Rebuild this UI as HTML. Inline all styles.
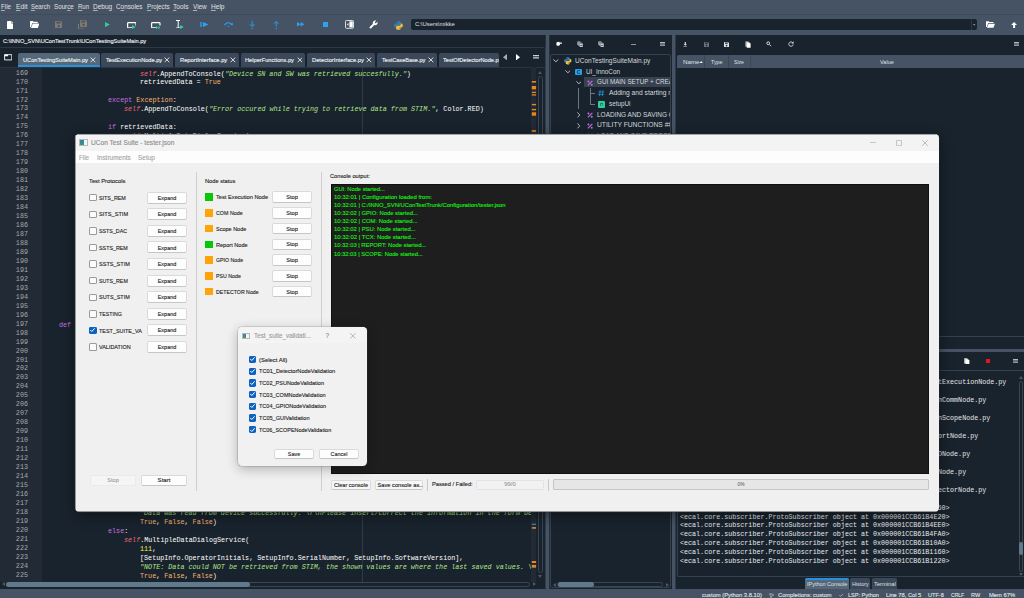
<!DOCTYPE html>
<html><head><meta charset="utf-8"><title>UCon Test Suite</title>
<style>
html,body{margin:0;padding:0;}
body{width:1024px;height:598px;overflow:hidden;background:#19232d;position:relative;font-family:"Liberation Sans",sans-serif;}
#root{position:absolute;left:0;top:0;width:1024px;height:598px;overflow:hidden;}
#root div,#root svg{position:absolute;box-sizing:border-box;}
.t{white-space:pre;}
#win .t{-webkit-text-stroke:0.12px currentColor;}
.clip{overflow:hidden;}
u{text-decoration:underline;text-underline-offset:0.6px;text-decoration-thickness:0.6px;text-decoration-color:rgba(224,225,227,.65)}
</style></head><body><div id="root">
<div style="left:0.00px;top:0.00px;width:1024.00px;height:35.00px;background:#455364;"></div>
<div style="left:0.00px;top:14.00px;width:1024.00px;height:1.00px;background:#3e4b5b;"></div>
<div class="t" style="top:2.50px;font-size:6.300px;line-height:8.19px;color:#e0e1e3;font-family:'Liberation Sans',sans-serif;left:1.30px;transform:scaleX(0.9850);transform-origin:0 50%;"><u>F</u>ile</div>
<div class="t" style="top:2.50px;font-size:6.300px;line-height:8.19px;color:#e0e1e3;font-family:'Liberation Sans',sans-serif;left:15.50px;transform:scaleX(1.0593);transform-origin:0 50%;"><u>E</u>dit</div>
<div class="t" style="top:2.50px;font-size:6.300px;line-height:8.19px;color:#e0e1e3;font-family:'Liberation Sans',sans-serif;left:30.80px;transform:scaleX(0.9518);transform-origin:0 50%;"><u>S</u>earch</div>
<div class="t" style="top:2.50px;font-size:6.300px;line-height:8.19px;color:#e0e1e3;font-family:'Liberation Sans',sans-serif;left:54.00px;transform:scaleX(0.9919);transform-origin:0 50%;">Sour<u>c</u>e</div>
<div class="t" style="top:2.50px;font-size:6.300px;line-height:8.19px;color:#e0e1e3;font-family:'Liberation Sans',sans-serif;left:77.80px;transform:scaleX(0.9518);transform-origin:0 50%;"><u>R</u>un</div>
<div class="t" style="top:2.50px;font-size:6.300px;line-height:8.19px;color:#e0e1e3;font-family:'Liberation Sans',sans-serif;left:92.80px;transform:scaleX(1.0342);transform-origin:0 50%;"><u>D</u>ebug</div>
<div class="t" style="top:2.50px;font-size:6.300px;line-height:8.19px;color:#e0e1e3;font-family:'Liberation Sans',sans-serif;left:116.30px;transform:scaleX(1.0089);transform-origin:0 50%;">C<u>o</u>nsoles</div>
<div class="t" style="top:2.50px;font-size:6.300px;line-height:8.19px;color:#e0e1e3;font-family:'Liberation Sans',sans-serif;left:146.80px;transform:scaleX(0.9887);transform-origin:0 50%;"><u>P</u>rojects</div>
<div class="t" style="top:2.50px;font-size:6.300px;line-height:8.19px;color:#e0e1e3;font-family:'Liberation Sans',sans-serif;left:173.30px;transform:scaleX(1.0539);transform-origin:0 50%;"><u>T</u>ools</div>
<div class="t" style="top:2.50px;font-size:6.300px;line-height:8.19px;color:#e0e1e3;font-family:'Liberation Sans',sans-serif;left:192.80px;transform:scaleX(1.0117);transform-origin:0 50%;"><u>V</u>iew</div>
<div class="t" style="top:2.50px;font-size:6.300px;line-height:8.19px;color:#e0e1e3;font-family:'Liberation Sans',sans-serif;left:210.80px;transform:scaleX(1.0419);transform-origin:0 50%;"><u>H</u>elp</div>
<div style="left:410.50px;top:19.00px;width:566.50px;height:10.80px;background:#19232d;border-radius:2px;"></div>
<div style="left:971.00px;top:19.00px;width:1.00px;height:10.80px;background:#2c3845;"></div>
<div class="t" style="top:21.23px;font-size:5.800px;line-height:7.54px;color:#e0e1e3;font-family:'Liberation Sans',sans-serif;left:415.00px;transform:scaleX(1.0123);transform-origin:0 50%;">C:\Users\mikke</div>
<div class="t" style="top:38.00px;font-size:5.700px;line-height:7.41px;color:#eceef0;font-family:'Liberation Sans',sans-serif;left:2.50px;transform:scaleX(0.9926);transform-origin:0 50%;-webkit-text-stroke:0.14px currentColor;">C:\INNO_SVN\UConTestTrunk\UConTestingSuiteMain.py</div>
<div style="left:0.00px;top:47.40px;width:544.40px;height:0.80px;background:#2c3846;"></div>
<div style="left:544.60px;top:47.00px;width:1.20px;height:541.00px;background:#2b3643;"></div>
<svg style="left:545px;top:35px" width="5" height="554"><rect x="0.7" y="0" width="3.6" height="554" fill="#455364"/></svg>
<svg style="left:671px;top:35px" width="5" height="554"><rect x="1" y="0" width="3.5" height="554" fill="#455364"/></svg>
<div style="left:0.00px;top:589.00px;width:1024.00px;height:9.00px;background:#455364;"></div>
<div style="left:18.00px;top:53.40px;width:82.00px;height:13.60px;background:#54687a;border-radius:2px 2px 0 0;border-bottom:2px solid #2a8fdc;"></div>
<div class="t" style="top:56.59px;font-size:5.700px;line-height:7.41px;color:#eceef0;font-family:'Liberation Sans',sans-serif;left:22.60px;transform:scaleX(0.9911);transform-origin:0 50%;-webkit-text-stroke:0.14px currentColor;">UConTestingSuiteMain.py</div>
<svg style="left:90.40px;top:57.3px" width="5.8" height="5.8" viewBox="0 0 10 10"><path d="M1 1L9 9M9 1L1 9" stroke="#f2f3f4" stroke-width="1.5" fill="none"/></svg>
<div style="left:101.00px;top:53.40px;width:71.80px;height:13.60px;background:#3b4859;border-radius:2px 2px 0 0;"></div>
<div class="t" style="top:56.59px;font-size:5.700px;line-height:7.41px;color:#eceef0;font-family:'Liberation Sans',sans-serif;left:105.50px;transform:scaleX(0.9926);transform-origin:0 50%;-webkit-text-stroke:0.14px currentColor;">TestExecutionNode.py</div>
<svg style="left:164.40px;top:57.3px" width="5.8" height="5.8" viewBox="0 0 10 10"><path d="M1 1L9 9M9 1L1 9" stroke="#f2f3f4" stroke-width="1.5" fill="none"/></svg>
<div style="left:174.50px;top:53.40px;width:64.80px;height:13.60px;background:#3b4859;border-radius:2px 2px 0 0;"></div>
<div class="t" style="top:56.59px;font-size:5.700px;line-height:7.41px;color:#eceef0;font-family:'Liberation Sans',sans-serif;left:179.50px;transform:scaleX(1.0087);transform-origin:0 50%;-webkit-text-stroke:0.14px currentColor;">ReportInterface.py</div>
<svg style="left:229.90px;top:57.3px" width="5.8" height="5.8" viewBox="0 0 10 10"><path d="M1 1L9 9M9 1L1 9" stroke="#f2f3f4" stroke-width="1.5" fill="none"/></svg>
<div style="left:241.00px;top:53.40px;width:64.00px;height:13.60px;background:#3b4859;border-radius:2px 2px 0 0;"></div>
<div class="t" style="top:56.59px;font-size:5.700px;line-height:7.41px;color:#eceef0;font-family:'Liberation Sans',sans-serif;left:244.50px;transform:scaleX(0.9978);transform-origin:0 50%;-webkit-text-stroke:0.14px currentColor;">HelperFunctions.py</div>
<svg style="left:296.60px;top:57.3px" width="5.8" height="5.8" viewBox="0 0 10 10"><path d="M1 1L9 9M9 1L1 9" stroke="#f2f3f4" stroke-width="1.5" fill="none"/></svg>
<div style="left:307.00px;top:53.40px;width:68.30px;height:13.60px;background:#3b4859;border-radius:2px 2px 0 0;"></div>
<div class="t" style="top:56.59px;font-size:5.700px;line-height:7.41px;color:#eceef0;font-family:'Liberation Sans',sans-serif;left:311.50px;transform:scaleX(1.0131);transform-origin:0 50%;-webkit-text-stroke:0.14px currentColor;">DetectorInterface.py</div>
<svg style="left:366.40px;top:57.3px" width="5.8" height="5.8" viewBox="0 0 10 10"><path d="M1 1L9 9M9 1L1 9" stroke="#f2f3f4" stroke-width="1.5" fill="none"/></svg>
<div style="left:377.00px;top:53.40px;width:59.50px;height:13.60px;background:#3b4859;border-radius:2px 2px 0 0;"></div>
<div class="t" style="top:56.59px;font-size:5.700px;line-height:7.41px;color:#eceef0;font-family:'Liberation Sans',sans-serif;left:381.50px;transform:scaleX(0.9807);transform-origin:0 50%;-webkit-text-stroke:0.14px currentColor;">TestCaseBase.py</div>
<svg style="left:427.90px;top:57.3px" width="5.8" height="5.8" viewBox="0 0 10 10"><path d="M1 1L9 9M9 1L1 9" stroke="#f2f3f4" stroke-width="1.5" fill="none"/></svg>
<div style="left:438.50px;top:53.40px;width:60.00px;height:13.60px;background:#3b4859;border-radius:2px 2px 0 0;"></div>
<div class="clip" style="left:443px;top:54px;width:55.5px;height:13px">
<div class="t" style="top:2.59px;font-size:5.700px;line-height:7.41px;color:#eceef0;font-family:'Liberation Sans',sans-serif;left:0.00px;transform:scaleX(0.9891);transform-origin:0 50%;-webkit-text-stroke:0.14px currentColor;">TestOfDetectorNode.py</div>
</div>
<svg style="left:4px;top:54px" width="8.4" height="6.6" viewBox="0 0 17 13"><path d="M1.2 1.2H15.8V11.8H1.2Z" fill="none" stroke="#fff" stroke-width="1.8"/><path d="M1 1H8V4.4H1Z" fill="#fff"/></svg>
<svg style="left:502.5px;top:53.6px" width="4" height="6.4" viewBox="0 0 4 6.4"><path d="M4 0V6.4L0 3.2Z" fill="#a4acb4"/></svg>
<svg style="left:516.3px;top:53.6px" width="4" height="6.4" viewBox="0 0 4 6.4"><path d="M0 0V6.4L4 3.2Z" fill="#fff"/></svg>
<svg style="left:532.60px;top:55.00px" width="6.4" height="4.4" viewBox="0 0 6.4 4.4" preserveAspectRatio="none"><path d="M0 0H6.4V1H0ZM0 1.7H6.4V2.7H0ZM0 3.4H6.4V4.4H0Z" fill="#c9cdd1"/></svg>
<div style="left:0.00px;top:67.00px;width:42.00px;height:514.50px;background:#222b35;"></div>
<div style="left:0.00px;top:66.60px;width:545.00px;height:1.00px;background:#2a3541;"></div>
<div style="left:530.90px;top:67.00px;width:5.60px;height:514.50px;background:#222b35;"></div>
<div style="left:361.60px;top:67.00px;width:0.70px;height:514.50px;background:#2f3b48;"></div>
<div class="t" style="top:68.62px;font-size:7.500px;line-height:9.75px;color:#a4a8ac;font-family:'Liberation Mono',monospace;left:-372.40px;width:400px;text-align:right;transform:scaleX(0.8981);transform-origin:100% 50%;">169</div>
<div class="t" style="top:77.59px;font-size:7.500px;line-height:9.75px;color:#a4a8ac;font-family:'Liberation Mono',monospace;left:-372.40px;width:400px;text-align:right;transform:scaleX(0.8981);transform-origin:100% 50%;">170</div>
<div class="t" style="top:86.56px;font-size:7.500px;line-height:9.75px;color:#a4a8ac;font-family:'Liberation Mono',monospace;left:-372.40px;width:400px;text-align:right;transform:scaleX(0.8981);transform-origin:100% 50%;">171</div>
<div class="t" style="top:95.52px;font-size:7.500px;line-height:9.75px;color:#a4a8ac;font-family:'Liberation Mono',monospace;left:-372.40px;width:400px;text-align:right;transform:scaleX(0.8981);transform-origin:100% 50%;">172</div>
<div class="t" style="top:104.48px;font-size:7.500px;line-height:9.75px;color:#a4a8ac;font-family:'Liberation Mono',monospace;left:-372.40px;width:400px;text-align:right;transform:scaleX(0.8981);transform-origin:100% 50%;">173</div>
<div class="t" style="top:113.45px;font-size:7.500px;line-height:9.75px;color:#a4a8ac;font-family:'Liberation Mono',monospace;left:-372.40px;width:400px;text-align:right;transform:scaleX(0.8981);transform-origin:100% 50%;">174</div>
<div class="t" style="top:122.41px;font-size:7.500px;line-height:9.75px;color:#a4a8ac;font-family:'Liberation Mono',monospace;left:-372.40px;width:400px;text-align:right;transform:scaleX(0.8981);transform-origin:100% 50%;">175</div>
<div class="t" style="top:131.38px;font-size:7.500px;line-height:9.75px;color:#a4a8ac;font-family:'Liberation Mono',monospace;left:-372.40px;width:400px;text-align:right;transform:scaleX(0.8981);transform-origin:100% 50%;">176</div>
<div class="t" style="top:140.34px;font-size:7.500px;line-height:9.75px;color:#a4a8ac;font-family:'Liberation Mono',monospace;left:-372.40px;width:400px;text-align:right;transform:scaleX(0.8981);transform-origin:100% 50%;">177</div>
<div class="t" style="top:149.31px;font-size:7.500px;line-height:9.75px;color:#a4a8ac;font-family:'Liberation Mono',monospace;left:-372.40px;width:400px;text-align:right;transform:scaleX(0.8981);transform-origin:100% 50%;">178</div>
<div class="t" style="top:158.28px;font-size:7.500px;line-height:9.75px;color:#a4a8ac;font-family:'Liberation Mono',monospace;left:-372.40px;width:400px;text-align:right;transform:scaleX(0.8981);transform-origin:100% 50%;">179</div>
<div class="t" style="top:167.24px;font-size:7.500px;line-height:9.75px;color:#a4a8ac;font-family:'Liberation Mono',monospace;left:-372.40px;width:400px;text-align:right;transform:scaleX(0.8981);transform-origin:100% 50%;">180</div>
<div class="t" style="top:176.20px;font-size:7.500px;line-height:9.75px;color:#a4a8ac;font-family:'Liberation Mono',monospace;left:-372.40px;width:400px;text-align:right;transform:scaleX(0.8981);transform-origin:100% 50%;">181</div>
<div class="t" style="top:185.17px;font-size:7.500px;line-height:9.75px;color:#a4a8ac;font-family:'Liberation Mono',monospace;left:-372.40px;width:400px;text-align:right;transform:scaleX(0.8981);transform-origin:100% 50%;">182</div>
<div class="t" style="top:194.13px;font-size:7.500px;line-height:9.75px;color:#a4a8ac;font-family:'Liberation Mono',monospace;left:-372.40px;width:400px;text-align:right;transform:scaleX(0.8981);transform-origin:100% 50%;">183</div>
<div class="t" style="top:203.10px;font-size:7.500px;line-height:9.75px;color:#a4a8ac;font-family:'Liberation Mono',monospace;left:-372.40px;width:400px;text-align:right;transform:scaleX(0.8981);transform-origin:100% 50%;">184</div>
<div class="t" style="top:212.06px;font-size:7.500px;line-height:9.75px;color:#a4a8ac;font-family:'Liberation Mono',monospace;left:-372.40px;width:400px;text-align:right;transform:scaleX(0.8981);transform-origin:100% 50%;">185</div>
<div class="t" style="top:221.03px;font-size:7.500px;line-height:9.75px;color:#a4a8ac;font-family:'Liberation Mono',monospace;left:-372.40px;width:400px;text-align:right;transform:scaleX(0.8981);transform-origin:100% 50%;">186</div>
<div class="t" style="top:230.00px;font-size:7.500px;line-height:9.75px;color:#a4a8ac;font-family:'Liberation Mono',monospace;left:-372.40px;width:400px;text-align:right;transform:scaleX(0.8981);transform-origin:100% 50%;">187</div>
<div class="t" style="top:238.96px;font-size:7.500px;line-height:9.75px;color:#a4a8ac;font-family:'Liberation Mono',monospace;left:-372.40px;width:400px;text-align:right;transform:scaleX(0.8981);transform-origin:100% 50%;">188</div>
<div class="t" style="top:247.93px;font-size:7.500px;line-height:9.75px;color:#a4a8ac;font-family:'Liberation Mono',monospace;left:-372.40px;width:400px;text-align:right;transform:scaleX(0.8981);transform-origin:100% 50%;">189</div>
<div class="t" style="top:256.89px;font-size:7.500px;line-height:9.75px;color:#a4a8ac;font-family:'Liberation Mono',monospace;left:-372.40px;width:400px;text-align:right;transform:scaleX(0.8981);transform-origin:100% 50%;">190</div>
<div class="t" style="top:265.86px;font-size:7.500px;line-height:9.75px;color:#a4a8ac;font-family:'Liberation Mono',monospace;left:-372.40px;width:400px;text-align:right;transform:scaleX(0.8981);transform-origin:100% 50%;">191</div>
<div class="t" style="top:274.82px;font-size:7.500px;line-height:9.75px;color:#a4a8ac;font-family:'Liberation Mono',monospace;left:-372.40px;width:400px;text-align:right;transform:scaleX(0.8981);transform-origin:100% 50%;">192</div>
<div class="t" style="top:283.78px;font-size:7.500px;line-height:9.75px;color:#a4a8ac;font-family:'Liberation Mono',monospace;left:-372.40px;width:400px;text-align:right;transform:scaleX(0.8981);transform-origin:100% 50%;">193</div>
<div class="t" style="top:292.75px;font-size:7.500px;line-height:9.75px;color:#a4a8ac;font-family:'Liberation Mono',monospace;left:-372.40px;width:400px;text-align:right;transform:scaleX(0.8981);transform-origin:100% 50%;">194</div>
<div class="t" style="top:301.72px;font-size:7.500px;line-height:9.75px;color:#a4a8ac;font-family:'Liberation Mono',monospace;left:-372.40px;width:400px;text-align:right;transform:scaleX(0.8981);transform-origin:100% 50%;">195</div>
<div class="t" style="top:310.68px;font-size:7.500px;line-height:9.75px;color:#a4a8ac;font-family:'Liberation Mono',monospace;left:-372.40px;width:400px;text-align:right;transform:scaleX(0.8981);transform-origin:100% 50%;">196</div>
<div class="t" style="top:319.64px;font-size:7.500px;line-height:9.75px;color:#a4a8ac;font-family:'Liberation Mono',monospace;left:-372.40px;width:400px;text-align:right;transform:scaleX(0.8981);transform-origin:100% 50%;">197</div>
<div class="t" style="top:328.61px;font-size:7.500px;line-height:9.75px;color:#a4a8ac;font-family:'Liberation Mono',monospace;left:-372.40px;width:400px;text-align:right;transform:scaleX(0.8981);transform-origin:100% 50%;">198</div>
<div class="t" style="top:337.57px;font-size:7.500px;line-height:9.75px;color:#a4a8ac;font-family:'Liberation Mono',monospace;left:-372.40px;width:400px;text-align:right;transform:scaleX(0.8981);transform-origin:100% 50%;">199</div>
<div class="t" style="top:346.54px;font-size:7.500px;line-height:9.75px;color:#a4a8ac;font-family:'Liberation Mono',monospace;left:-372.40px;width:400px;text-align:right;transform:scaleX(0.8981);transform-origin:100% 50%;">200</div>
<div class="t" style="top:355.50px;font-size:7.500px;line-height:9.75px;color:#a4a8ac;font-family:'Liberation Mono',monospace;left:-372.40px;width:400px;text-align:right;transform:scaleX(0.8981);transform-origin:100% 50%;">201</div>
<div class="t" style="top:364.47px;font-size:7.500px;line-height:9.75px;color:#a4a8ac;font-family:'Liberation Mono',monospace;left:-372.40px;width:400px;text-align:right;transform:scaleX(0.8981);transform-origin:100% 50%;">202</div>
<div class="t" style="top:373.44px;font-size:7.500px;line-height:9.75px;color:#a4a8ac;font-family:'Liberation Mono',monospace;left:-372.40px;width:400px;text-align:right;transform:scaleX(0.8981);transform-origin:100% 50%;">203</div>
<div class="t" style="top:382.40px;font-size:7.500px;line-height:9.75px;color:#a4a8ac;font-family:'Liberation Mono',monospace;left:-372.40px;width:400px;text-align:right;transform:scaleX(0.8981);transform-origin:100% 50%;">204</div>
<div class="t" style="top:391.37px;font-size:7.500px;line-height:9.75px;color:#a4a8ac;font-family:'Liberation Mono',monospace;left:-372.40px;width:400px;text-align:right;transform:scaleX(0.8981);transform-origin:100% 50%;">205</div>
<div class="t" style="top:400.33px;font-size:7.500px;line-height:9.75px;color:#a4a8ac;font-family:'Liberation Mono',monospace;left:-372.40px;width:400px;text-align:right;transform:scaleX(0.8981);transform-origin:100% 50%;">206</div>
<div class="t" style="top:409.30px;font-size:7.500px;line-height:9.75px;color:#a4a8ac;font-family:'Liberation Mono',monospace;left:-372.40px;width:400px;text-align:right;transform:scaleX(0.8981);transform-origin:100% 50%;">207</div>
<div class="t" style="top:418.26px;font-size:7.500px;line-height:9.75px;color:#a4a8ac;font-family:'Liberation Mono',monospace;left:-372.40px;width:400px;text-align:right;transform:scaleX(0.8981);transform-origin:100% 50%;">208</div>
<div class="t" style="top:427.23px;font-size:7.500px;line-height:9.75px;color:#a4a8ac;font-family:'Liberation Mono',monospace;left:-372.40px;width:400px;text-align:right;transform:scaleX(0.8981);transform-origin:100% 50%;">209</div>
<div class="t" style="top:436.19px;font-size:7.500px;line-height:9.75px;color:#a4a8ac;font-family:'Liberation Mono',monospace;left:-372.40px;width:400px;text-align:right;transform:scaleX(0.8981);transform-origin:100% 50%;">210</div>
<div class="t" style="top:445.15px;font-size:7.500px;line-height:9.75px;color:#a4a8ac;font-family:'Liberation Mono',monospace;left:-372.40px;width:400px;text-align:right;transform:scaleX(0.8981);transform-origin:100% 50%;">211</div>
<div class="t" style="top:454.12px;font-size:7.500px;line-height:9.75px;color:#a4a8ac;font-family:'Liberation Mono',monospace;left:-372.40px;width:400px;text-align:right;transform:scaleX(0.8981);transform-origin:100% 50%;">212</div>
<div class="t" style="top:463.08px;font-size:7.500px;line-height:9.75px;color:#a4a8ac;font-family:'Liberation Mono',monospace;left:-372.40px;width:400px;text-align:right;transform:scaleX(0.8981);transform-origin:100% 50%;">213</div>
<div class="t" style="top:472.05px;font-size:7.500px;line-height:9.75px;color:#a4a8ac;font-family:'Liberation Mono',monospace;left:-372.40px;width:400px;text-align:right;transform:scaleX(0.8981);transform-origin:100% 50%;">214</div>
<div class="t" style="top:481.01px;font-size:7.500px;line-height:9.75px;color:#a4a8ac;font-family:'Liberation Mono',monospace;left:-372.40px;width:400px;text-align:right;transform:scaleX(0.8981);transform-origin:100% 50%;">215</div>
<div class="t" style="top:489.98px;font-size:7.500px;line-height:9.75px;color:#a4a8ac;font-family:'Liberation Mono',monospace;left:-372.40px;width:400px;text-align:right;transform:scaleX(0.8981);transform-origin:100% 50%;">216</div>
<div class="t" style="top:498.94px;font-size:7.500px;line-height:9.75px;color:#a4a8ac;font-family:'Liberation Mono',monospace;left:-372.40px;width:400px;text-align:right;transform:scaleX(0.8981);transform-origin:100% 50%;">217</div>
<div class="t" style="top:507.91px;font-size:7.500px;line-height:9.75px;color:#a4a8ac;font-family:'Liberation Mono',monospace;left:-372.40px;width:400px;text-align:right;transform:scaleX(0.8981);transform-origin:100% 50%;">218</div>
<div class="t" style="top:516.88px;font-size:7.500px;line-height:9.75px;color:#a4a8ac;font-family:'Liberation Mono',monospace;left:-372.40px;width:400px;text-align:right;transform:scaleX(0.8981);transform-origin:100% 50%;">219</div>
<div class="t" style="top:525.84px;font-size:7.500px;line-height:9.75px;color:#a4a8ac;font-family:'Liberation Mono',monospace;left:-372.40px;width:400px;text-align:right;transform:scaleX(0.8981);transform-origin:100% 50%;">220</div>
<div class="t" style="top:534.81px;font-size:7.500px;line-height:9.75px;color:#a4a8ac;font-family:'Liberation Mono',monospace;left:-372.40px;width:400px;text-align:right;transform:scaleX(0.8981);transform-origin:100% 50%;">221</div>
<div class="t" style="top:543.77px;font-size:7.500px;line-height:9.75px;color:#a4a8ac;font-family:'Liberation Mono',monospace;left:-372.40px;width:400px;text-align:right;transform:scaleX(0.8981);transform-origin:100% 50%;">222</div>
<div class="t" style="top:552.74px;font-size:7.500px;line-height:9.75px;color:#a4a8ac;font-family:'Liberation Mono',monospace;left:-372.40px;width:400px;text-align:right;transform:scaleX(0.8981);transform-origin:100% 50%;">223</div>
<div class="t" style="top:561.70px;font-size:7.500px;line-height:9.75px;color:#a4a8ac;font-family:'Liberation Mono',monospace;left:-372.40px;width:400px;text-align:right;transform:scaleX(0.8981);transform-origin:100% 50%;">224</div>
<div class="t" style="top:570.66px;font-size:7.500px;line-height:9.75px;color:#a4a8ac;font-family:'Liberation Mono',monospace;left:-372.40px;width:400px;text-align:right;transform:scaleX(0.8981);transform-origin:100% 50%;">225</div>
<div class="clip" style="left:41px;top:67px;width:489.9px;height:514.5px">
<div class="t" style="left:99.01px;top:1.50px;font-size:7.500px;line-height:10px;font-family:'Liberation Mono',monospace;color:#fff;transform:scaleX(0.8981);transform-origin:0 50%"><span style="color:#ee6772;font-style:italic;">self</span><span style="color:#ffffff;">.AppendToConsole(</span><span style="color:#b0e686;font-style:italic;">&quot;Device SN and SW was retrieved succesfully.&quot;</span><span style="color:#ffffff;">)</span></div>
<div class="t" style="left:99.01px;top:10.47px;font-size:7.500px;line-height:10px;font-family:'Liberation Mono',monospace;color:#fff;transform:scaleX(0.8981);transform-origin:0 50%"><span style="color:#ffffff;">retrievedData = </span><span style="color:#fab16c;">True</span></div>
<div class="t" style="left:66.67px;top:28.39px;font-size:7.500px;line-height:10px;font-family:'Liberation Mono',monospace;color:#fff;transform:scaleX(0.8981);transform-origin:0 50%"><span style="color:#c670e0;">except </span><span style="color:#fab16c;">Exception</span><span style="color:#ffffff;">:</span></div>
<div class="t" style="left:82.84px;top:37.36px;font-size:7.500px;line-height:10px;font-family:'Liberation Mono',monospace;color:#fff;transform:scaleX(0.8981);transform-origin:0 50%"><span style="color:#ee6772;font-style:italic;">self</span><span style="color:#ffffff;">.AppendToConsole(</span><span style="color:#b0e686;font-style:italic;">&quot;Error occured while trying to retrieve data from STIM.&quot;</span><span style="color:#ffffff;">, Color.RED)</span></div>
<div class="t" style="left:66.67px;top:55.29px;font-size:7.500px;line-height:10px;font-family:'Liberation Mono',monospace;color:#fff;transform:scaleX(0.8981);transform-origin:0 50%"><span style="color:#c670e0;">if </span><span style="color:#ffffff;">retrievedData:</span></div>
<div class="t" style="left:82.84px;top:64.25px;font-size:7.500px;line-height:10px;font-family:'Liberation Mono',monospace;color:#fff;transform:scaleX(0.8981);transform-origin:0 50%"><span style="color:#ee6772;font-style:italic;">self</span><span style="color:#ffffff;">.MultipleDataDialogService(</span></div>
<div class="t" style="left:18.17px;top:252.52px;font-size:7.500px;line-height:10px;font-family:'Liberation Mono',monospace;color:#fff;transform:scaleX(0.8981);transform-origin:0 50%"><span style="color:#c670e0;">def </span></div>
<div class="t" style="left:99.01px;top:440.78px;font-size:7.500px;line-height:10px;font-family:'Liberation Mono',monospace;color:#fff;transform:scaleX(0.8981);transform-origin:0 50%"><span style="color:#b0e686;font-style:italic;">&quot;Data was read from device successfully. \r\nPlease insert/correct the information in the form below</span></div>
<div class="t" style="left:99.01px;top:449.75px;font-size:7.500px;line-height:10px;font-family:'Liberation Mono',monospace;color:#fff;transform:scaleX(0.8981);transform-origin:0 50%"><span style="color:#fab16c;">True</span><span style="color:#ffffff;">, </span><span style="color:#fab16c;">False</span><span style="color:#ffffff;">, </span><span style="color:#fab16c;">False</span><span style="color:#ffffff;">)</span></div>
<div class="t" style="left:66.67px;top:458.71px;font-size:7.500px;line-height:10px;font-family:'Liberation Mono',monospace;color:#fff;transform:scaleX(0.8981);transform-origin:0 50%"><span style="color:#c670e0;">else</span><span style="color:#ffffff;">:</span></div>
<div class="t" style="left:82.84px;top:467.68px;font-size:7.500px;line-height:10px;font-family:'Liberation Mono',monospace;color:#fff;transform:scaleX(0.8981);transform-origin:0 50%"><span style="color:#ee6772;font-style:italic;">self</span><span style="color:#ffffff;">.MultipleDataDialogService(</span></div>
<div class="t" style="left:99.01px;top:476.64px;font-size:7.500px;line-height:10px;font-family:'Liberation Mono',monospace;color:#fff;transform:scaleX(0.8981);transform-origin:0 50%"><span style="color:#faed5c;">111</span><span style="color:#ffffff;">,</span></div>
<div class="t" style="left:99.01px;top:485.61px;font-size:7.500px;line-height:10px;font-family:'Liberation Mono',monospace;color:#fff;transform:scaleX(0.8981);transform-origin:0 50%"><span style="color:#ffffff;">[SetupInfo.OperatorInitials, SetupInfo.SerialNumber, SetupInfo.SoftwareVersion],</span></div>
<div class="t" style="left:99.01px;top:494.58px;font-size:7.500px;line-height:10px;font-family:'Liberation Mono',monospace;color:#fff;transform:scaleX(0.8981);transform-origin:0 50%"><span style="color:#b0e686;font-style:italic;">&quot;NOTE: Data could NOT be retrieved from STIM, the shown values are where the last saved values. \r\n</span></div>
<div class="t" style="left:99.01px;top:503.54px;font-size:7.500px;line-height:10px;font-family:'Liberation Mono',monospace;color:#fff;transform:scaleX(0.8981);transform-origin:0 50%"><span style="color:#fab16c;">True</span><span style="color:#ffffff;">, </span><span style="color:#fab16c;">False</span><span style="color:#ffffff;">, </span><span style="color:#fab16c;">False</span><span style="color:#ffffff;">)</span></div>
</div>
<svg style="left:531px;top:67px" width="6" height="515"><rect x="0.8" y="14.00" width="4.3" height="1.6" fill="#e8871d"/><rect x="0.8" y="19.00" width="4.3" height="3.4" fill="#e8871d"/><rect x="0.8" y="24.75" width="4.3" height="1.3" fill="#e8871d"/><rect x="0.8" y="27.25" width="4.3" height="1.3" fill="#e8871d"/><rect x="0.8" y="36.90" width="4.3" height="1.4" fill="#e8871d"/><rect x="0.8" y="41.90" width="4.3" height="1.4" fill="#e8871d"/><rect x="0.8" y="45.30" width="4.3" height="3.4" fill="#e8871d"/><rect x="0.8" y="63.20" width="4.3" height="1.6" fill="#e8871d"/><rect x="0.8" y="456.70" width="4.3" height="1.2" fill="#2a8fdc"/><rect x="0.8" y="460.10" width="4.3" height="1.6" fill="#e8871d"/><rect x="0.8" y="494.00" width="4.3" height="2.0" fill="#e8871d"/><rect x="0.8" y="497.95" width="4.3" height="2.7" fill="#e8871d"/></svg>
<div style="left:538.00px;top:75.50px;width:4.60px;height:497.00px;background:#19232d;border:0.7px solid #3a4654;border-radius:2.3px;"></div>
<svg style="left:538.3px;top:71px" width="4" height="3" viewBox="0 0 4 3"><path d="M0 3H4L2 0Z" fill="#4a5868"/></svg>
<svg style="left:538.3px;top:574.5px" width="4" height="3" viewBox="0 0 4 3"><path d="M0 0H4L2 3Z" fill="#4a5868"/></svg>
<div style="left:5.50px;top:581.60px;width:524.00px;height:5.00px;background:#19232d;border:0.8px solid #3a4654;border-radius:2.5px;"></div>
<div style="left:6.00px;top:581.60px;width:244.00px;height:5.00px;background:#60798b;border-radius:2.5px;"></div>
<svg style="left:2px;top:582px" width="3" height="4" viewBox="0 0 3 4"><path d="M3 0V4L0 2Z" fill="#4a5868"/></svg>
<svg style="left:532.5px;top:582px" width="3" height="4" viewBox="0 0 3 4"><path d="M0 0V4L3 2Z" fill="#4a5868"/></svg>
<svg style="left:6.60px;top:20.70px" width="6.80" height="8.40" viewBox="0 0 68 84"><path d="M6 0H44L68 24V78Q68 84 62 84H6Q0 84 0 78V6Q0 0 6 0Z" fill="#fff"/><path d="M44 0V24H68Z" fill="#455364"/><path d="M47 5L63 21H47Z" fill="#fff"/></svg>
<svg style="left:29.80px;top:21.30px" width="9.40" height="7.00" viewBox="0 0 94 70"><path d="M4 0H28L36 8H74Q78 8 78 12V20H24L8 62V62L0 62V4Q0 0 4 0Z" fill="#fff"/><path d="M28 26H94L78 70H10Z" fill="#fff"/></svg>
<svg style="left:54.80px;top:21.10px" width="7.40" height="7.20" viewBox="0 0 74 72"><path d="M6 0H56L74 16V66Q74 72 68 72H6Q0 72 0 66V6Q0 0 6 0ZM14 8V26H54V8ZM37 40A11 11 0 1 0 37.1 40Z" fill="#81786f" fill-rule="evenodd"/></svg>
<svg style="left:77.80px;top:22.60px" width="7.20" height="6.60" viewBox="0 0 72 66"><path d="M0 8V60Q0 66 6 66H60V56H10V8Z" fill="#81786f"/></svg>
<svg style="left:80.20px;top:20.30px" width="7.10" height="6.91" viewBox="0 0 74 72"><path d="M6 0H56L74 16V66Q74 72 68 72H6Q0 72 0 66V6Q0 0 6 0ZM14 8V26H54V8ZM37 40A11 11 0 1 0 37.1 40Z" fill="#81786f" fill-rule="evenodd"/></svg>
<svg style="left:83.20px;top:24.60px" width="1.40" height="1.40" viewBox="0 0 10 10"><path d="M4 0H6V4H10V6H6V10H4V6H0V4H4Z" fill="#455364"/></svg>
<svg style="left:105.00px;top:22.20px" width="4.90" height="5.20" viewBox="0 0 49 52"><path d="M0 0L49 26L0 52Z" fill="#2fcf9a"/></svg>
<svg style="left:126.60px;top:21.50px" width="9.60" height="6.40" viewBox="0 0 96 64"><path d="M60 58H14Q6 58 6 50V14Q6 6 14 6H82Q90 6 90 14V34" fill="none" stroke="#fff" stroke-width="12"/></svg>
<svg style="left:132.20px;top:25.10px" width="3.90" height="4.00" viewBox="0 0 39 40"><path d="M0 0L39 20L0 40Z" fill="#2fcf9a"/></svg>
<svg style="left:151.00px;top:21.50px" width="9.60" height="6.40" viewBox="0 0 96 64"><path d="M60 58H14Q6 58 6 50V14Q6 6 14 6H82Q90 6 90 14V34" fill="none" stroke="#fff" stroke-width="12"/></svg>
<svg style="left:155.60px;top:25.60px" width="4.60" height="3.20" viewBox="0 0 46 32"><path d="M0 0L22 16L0 32ZM24 0L46 16L24 32Z" fill="#2fcf9a"/></svg>
<svg style="left:175.80px;top:20.00px" width="4.40" height="8.30" viewBox="0 0 44 83"><path d="M0 0H44V9H27V74H44V83H0V74H17V9H0Z" fill="#fff"/></svg>
<svg style="left:180.30px;top:25.10px" width="3.90" height="4.00" viewBox="0 0 39 40"><path d="M0 0L39 20L0 40Z" fill="#2fcf9a"/></svg>
<svg style="left:199.70px;top:22.30px" width="8.40" height="5.00" viewBox="0 0 84 50"><path d="M0 0H7V50H0ZM14 0H21V50H14ZM29 0V50L84 25Z" fill="#2ea2f0"/></svg>
<svg style="left:224.00px;top:22.20px" width="9.00" height="5.00" viewBox="0 0 90 50"><path d="M6 34Q14 8 42 8Q66 8 76 26" fill="none" stroke="#2ea2f0" stroke-width="11"/><path d="M62 30L90 32L84 6Z" fill="#2ea2f0"/><circle cx="42" cy="42" r="7" fill="#2ea2f0"/></svg>
<svg style="left:249.30px;top:21.00px" width="6.40" height="8.20" viewBox="0 0 64 82"><path d="M32 0V52" stroke="#2ea2f0" stroke-width="9" fill="none"/><path d="M8 32L32 56L56 32" stroke="#2ea2f0" stroke-width="9" fill="none"/><circle cx="32" cy="74" r="6.5" fill="#2ea2f0"/></svg>
<svg style="left:273.30px;top:21.00px" width="6.40" height="8.20" viewBox="0 0 64 82"><path d="M32 6V56" stroke="#2ea2f0" stroke-width="9" fill="none"/><path d="M8 28L32 4L56 28" stroke="#2ea2f0" stroke-width="9" fill="none"/><circle cx="32" cy="74" r="6.5" fill="#2ea2f0"/></svg>
<svg style="left:297.30px;top:22.40px" width="7.40" height="4.60" viewBox="0 0 68 40"><path d="M0 0L34 20L0 40ZM34 0L68 20L34 40Z" fill="#2ea2f0"/></svg>
<div style="left:322.50px;top:22.20px;width:5.30px;height:5.00px;background:#2ea2f0;"></div>
<svg style="left:345.00px;top:20.30px" width="9.00" height="8.80" viewBox="0 0 90 88"><path d="M14 5H76Q85 5 85 14V74Q85 83 76 83H14Q5 83 5 74V14Q5 5 14 5Z" fill="none" stroke="#fff" stroke-width="8"/><path d="M44 14H78V74H44Z" fill="#fff"/><path d="M35 30V58L17 44Z" fill="#e8e8e8"/></svg>
<svg style="left:369.40px;top:20.40px" width="9.00" height="9.00" viewBox="0 0 24 24"><path d="M22.7 19l-9.1-9.1c.9-2.3.4-5-1.5-6.9-2-2-5-2.4-7.4-1.3L9 6 6 9 1.600 4.700C.4 7.100.9 10.100 2.900 12.100c1.900 1.900 4.600 2.400 6.900 1.500l9.100 9.100c.4.400 1 .4 1.400 0l2.300-2.300c.5-.4.500-1.100.1-1.400z" fill="#fff" transform="translate(24,0) scale(-1,1)"/></svg>
<svg style="left:393.60px;top:20.50px" width="9.00" height="9.00" viewBox="0 0 90 90"><path d="M44 2C24 2 25 11 25 11V22H45V26H16S2 24 2 45S14 66 14 66H23V55S22 42 36 42H56S68 42 68 30V12S70 2 44 2ZM33 9A4 4 0 1 1 33 17A4 4 0 1 1 33 9Z" fill="#3a7cb0"/><path d="M46 88C66 88 65 79 65 79V68H45V64H74S88 66 88 45S76 24 76 24H67V35S68 48 54 48H34S22 48 22 60V78S20 88 46 88ZM57 81A4 4 0 1 1 57 73A4 4 0 1 1 57 81Z" fill="#f2c63c"/></svg>
<svg style="left:973.20px;top:24.00px" width="2.40" height="1.80" viewBox="0 0 24 18"><path d="M0 0H24L12 18Z" fill="#8a97a5"/></svg>
<svg style="left:985.50px;top:21.20px" width="9.00" height="7.00" viewBox="0 0 94 70"><path d="M4 0H28L36 8H74Q78 8 78 12V20H24L8 62V62L0 62V4Q0 0 4 0Z" fill="#fff"/><path d="M28 26H94L78 70H10Z" fill="#fff"/></svg>
<svg style="left:1010.70px;top:21.50px" width="6.20" height="6.80" viewBox="0 0 66 74"><path d="M33 0L66 34H44V74H22V34H0Z" fill="#fff"/></svg>
<svg style="left:555.60px;top:41.40px" width="6.00" height="5.80" viewBox="0 0 60 58"><path d="M4 22Q4 10 16 10H22Q26 4 32 8L34 16H54Q60 16 60 22Q60 28 54 28H40Q42 32 38 34Q40 39 35 41Q36 47 30 48H14Q4 48 4 38Z" fill="#fff"/></svg>
<svg style="left:577.00px;top:41.00px" width="6.20" height="6.40" viewBox="0 0 62 64"><path d="M4 4H34V12H14V40H4Z" fill="#c9cdd1"/><path d="M14 14H46V22H26V50H14Z" fill="#c9cdd1" opacity=".85"/><path d="M26 24H58V60H26Z" fill="#c9cdd1"/><path d="M32 40H52V46H32Z" fill="#19232d"/></svg>
<svg style="left:598.00px;top:41.00px" width="6.20" height="6.40" viewBox="0 0 62 64"><path d="M4 4H34V12H14V40H4Z" fill="#c9cdd1"/><path d="M14 14H46V22H26V50H14Z" fill="#c9cdd1" opacity=".85"/><path d="M26 24H58V60H26Z" fill="#c9cdd1"/><path d="M32 40H52V46H32Z" fill="#19232d"/></svg>
<svg style="left:631.00px;top:43.60px" width="5.20" height="1.20" viewBox="0 0 52 12"><path d="M0 2H52V10H0Z" fill="#aeb4ba"/></svg>
<svg style="left:659.80px;top:42.10px" width="5.2" height="4.2" viewBox="0 0 5.2 4.4" preserveAspectRatio="none"><path d="M0 0H5.2V1H0ZM0 1.7H5.2V2.7H0ZM0 3.4H5.2V4.4H0Z" fill="#b4b9bf"/></svg>
<div style="left:549.80px;top:54.40px;width:121.40px;height:533.60px;background:#19232d;border:0.8px solid #34404e;border-radius:2px;"></div>
<div class="clip" style="left:550.4px;top:55px;width:119.6px;height:532px">
<div style="left:33.90px;top:22.30px;width:90.00px;height:10.00px;background:#37414f;"></div>
<div style="left:27.80px;top:33.00px;width:0.70px;height:21.00px;background:#6b7785;"></div>
<div style="left:39.30px;top:33.00px;width:0.70px;height:16.20px;background:#6b7785;"></div>
<div style="left:39.30px;top:38.10px;width:5.60px;height:0.70px;background:#6b7785;"></div>
<div style="left:39.30px;top:48.90px;width:5.60px;height:0.70px;background:#6b7785;"></div>
<div class="t" style="top:1.77px;font-size:6.500px;line-height:8.45px;color:#d6d9dc;font-family:'Liberation Sans',sans-serif;left:24.50px;transform:scaleX(1.0082);transform-origin:0 50%;">UConTestingSuiteMain.py</div>
<div class="t" style="top:12.57px;font-size:6.500px;line-height:8.45px;color:#d6d9dc;font-family:'Liberation Sans',sans-serif;left:35.50px;transform:scaleX(0.9801);transform-origin:0 50%;">UI_InnoCon</div>
<div class="t" style="top:23.48px;font-size:6.500px;line-height:8.45px;color:#d6d9dc;font-family:'Liberation Sans',sans-serif;left:46.60px;transform:scaleX(0.9681);transform-origin:0 50%;">GUI MAIN SETUP + CREATING</div>
<div class="t" style="top:34.27px;font-size:6.500px;line-height:8.45px;color:#d6d9dc;font-family:'Liberation Sans',sans-serif;left:58.20px;transform:scaleX(1.0261);transform-origin:0 50%;">Adding and starting nodes</div>
<div class="t" style="top:44.98px;font-size:6.500px;line-height:8.45px;color:#d6d9dc;font-family:'Liberation Sans',sans-serif;left:58.20px;transform:scaleX(0.9710);transform-origin:0 50%;">setupUi</div>
<div class="t" style="top:55.77px;font-size:6.500px;line-height:8.45px;color:#d6d9dc;font-family:'Liberation Sans',sans-serif;left:46.60px;transform:scaleX(0.9959);transform-origin:0 50%;">LOADING AND SAVING CONFIG</div>
<div class="t" style="top:66.48px;font-size:6.500px;line-height:8.45px;color:#d6d9dc;font-family:'Liberation Sans',sans-serif;left:46.60px;transform:scaleX(1.0310);transform-origin:0 50%;">UTILITY FUNCTIONS ######</div>
<div class="t" style="top:77.28px;font-size:6.500px;line-height:8.45px;color:#d6d9dc;font-family:'Liberation Sans',sans-serif;left:46.60px;transform:scaleX(0.9758);transform-origin:0 50%;">LOAD AND SAVE PROGRESS</div>
</div>
<svg style="left:553.10px;top:59.40px" width="5.80" height="3.40" viewBox="0 0 58 34"><path d="M4 4L29 28L54 4" fill="none" stroke="#dfe1e2" stroke-width="8"/></svg>
<svg style="left:564.00px;top:57.10px" width="7.60" height="7.60" viewBox="0 0 90 90"><path d="M44 2C24 2 25 11 25 11V22H45V26H16S2 24 2 45S14 66 14 66H23V55S22 42 36 42H56S68 42 68 30V12S70 2 44 2ZM33 9A4 4 0 1 1 33 17A4 4 0 1 1 33 9Z" fill="#3a82bd"/><path d="M46 88C66 88 65 79 65 79V68H45V64H74S88 66 88 45S76 24 76 24H67V35S68 48 54 48H34S22 48 22 60V78S20 88 46 88ZM57 81A4 4 0 1 1 57 73A4 4 0 1 1 57 81Z" fill="#f2c63c"/></svg>
<svg style="left:564.60px;top:70.20px" width="5.80" height="3.40" viewBox="0 0 58 34"><path d="M4 4L29 28L54 4" fill="none" stroke="#dfe1e2" stroke-width="8"/></svg>
<div style="left:575.30px;top:68.50px;width:6.50px;height:6.50px;background:#2a9be6;border-radius:1px;"></div>
<svg style="left:576.90px;top:69.90px" width="3.40" height="3.90" viewBox="0 0 34 39"><path d="M30 9Q25 3 17 3Q4 3 4 19.5Q4 36 17 36Q25 36 30 30" fill="none" stroke="#19232d" stroke-width="7"/></svg>
<svg style="left:575.70px;top:81.10px" width="5.80" height="3.40" viewBox="0 0 58 34"><path d="M4 4L29 28L54 4" fill="none" stroke="#dfe1e2" stroke-width="8"/></svg>
<svg style="left:586.90px;top:79.60px" width="6.20" height="6.20" viewBox="0 0 60 60"><path d="M8 52L52 8" stroke="#c670e0" stroke-width="11" fill="none"/><circle cx="14" cy="14" r="9.5" fill="#c670e0"/><circle cx="46" cy="46" r="9.5" fill="#c670e0"/></svg>
<svg style="left:598.00px;top:90.30px" width="6.50" height="6.40" viewBox="0 0 65 64"><path d="M22 2L14 62M50 2L42 62M4 20H62M2 44H60" stroke="#2a9be6" stroke-width="7" fill="none"/></svg>
<div style="left:598.00px;top:101.00px;width:6.50px;height:6.50px;background:#2fcf9a;border-radius:1px;"></div>
<svg style="left:599.60px;top:102.60px" width="3.30" height="3.40" viewBox="0 0 33 34"><path d="M3 34V8Q3 3 8 3H25Q30 3 30 8V34" fill="none" stroke="#19232d" stroke-width="6"/></svg>
<svg style="left:577.00px;top:112.10px" width="3.40" height="5.80" viewBox="0 0 34 58"><path d="M4 4L28 29L4 54" fill="none" stroke="#dfe1e2" stroke-width="8"/></svg>
<svg style="left:586.90px;top:111.90px" width="6.20" height="6.20" viewBox="0 0 60 60"><path d="M8 52L52 8" stroke="#c670e0" stroke-width="11" fill="none"/><circle cx="14" cy="14" r="9.5" fill="#c670e0"/><circle cx="46" cy="46" r="9.5" fill="#c670e0"/></svg>
<svg style="left:577.00px;top:122.80px" width="3.40" height="5.80" viewBox="0 0 34 58"><path d="M4 4L28 29L4 54" fill="none" stroke="#dfe1e2" stroke-width="8"/></svg>
<svg style="left:586.90px;top:122.60px" width="6.20" height="6.20" viewBox="0 0 60 60"><path d="M8 52L52 8" stroke="#c670e0" stroke-width="11" fill="none"/><circle cx="14" cy="14" r="9.5" fill="#c670e0"/><circle cx="46" cy="46" r="9.5" fill="#c670e0"/></svg>
<svg style="left:577.00px;top:133.60px" width="3.40" height="5.80" viewBox="0 0 34 58"><path d="M4 4L28 29L4 54" fill="none" stroke="#dfe1e2" stroke-width="8"/></svg>
<svg style="left:586.90px;top:133.40px" width="6.20" height="6.20" viewBox="0 0 60 60"><path d="M8 52L52 8" stroke="#c670e0" stroke-width="11" fill="none"/><circle cx="14" cy="14" r="9.5" fill="#c670e0"/><circle cx="46" cy="46" r="9.5" fill="#c670e0"/></svg>
<div style="left:556.70px;top:582.20px;width:106.60px;height:4.50px;background:#19232d;border:0.7px solid #3a4654;border-radius:2.2px;"></div>
<div style="left:557.80px;top:582.20px;width:36.50px;height:4.50px;background:#60798b;border-radius:2.2px;"></div>
<svg style="left:553.00px;top:582.50px" width="3.00" height="4.00" viewBox="0 0 3 4"><path d="M3 0V4L0 2Z" fill="#4a5868"/></svg>
<svg style="left:666.00px;top:582.50px" width="3.00" height="4.00" viewBox="0 0 3 4"><path d="M0 0V4L3 2Z" fill="#4a5868"/></svg>
<svg style="left:682.90px;top:41.60px" width="4.60" height="5.60" viewBox="0 0 54 64"><path d="M20 0H34V24H46L27 44L8 24H20Z" fill="#dfe1e2"/><path d="M4 52H50V60H4Z" fill="#dfe1e2"/></svg>
<svg style="left:703.80px;top:41.80px" width="5.03" height="4.90" viewBox="0 0 74 72"><path d="M6 0H56L74 16V66Q74 72 68 72H6Q0 72 0 66V6Q0 0 6 0ZM14 8V26H54V8ZM37 40A11 11 0 1 0 37.1 40Z" fill="#6d7680" fill-rule="evenodd"/></svg>
<svg style="left:724.30px;top:41.90px" width="5.18" height="5.04" viewBox="0 0 74 72"><path d="M6 0H56L74 16V66Q74 72 68 72H6Q0 72 0 66V6Q0 0 6 0ZM14 8V26H54V8ZM37 40A11 11 0 1 0 37.1 40Z" fill="#dfe1e2" fill-rule="evenodd"/></svg>
<svg style="left:745.30px;top:40.80px" width="6.00" height="7.00" viewBox="0 0 60 70"><path d="M4 4H36V58H4Z" fill="#dfe1e2" opacity=".8"/><path d="M18 14H44L56 26V68H18Z" fill="#fff"/></svg>
<svg style="left:766.30px;top:41.20px" width="5.60" height="5.80" viewBox="0 0 56 58"><circle cx="22" cy="22" r="14" fill="none" stroke="#dfe1e2" stroke-width="9"/><path d="M32 34L50 52" stroke="#dfe1e2" stroke-width="10"/></svg>
<svg style="left:787.60px;top:41.00px" width="6.00" height="6.00" viewBox="0 0 60 60"><path d="M48 18A22 22 0 1 0 52 34" fill="none" stroke="#dfe1e2" stroke-width="9"/><path d="M56 2V24H34Z" fill="#dfe1e2"/></svg>
<svg style="left:1013.60px;top:42.10px" width="5.2" height="4.2" viewBox="0 0 5.2 4.4" preserveAspectRatio="none"><path d="M0 0H5.2V1H0ZM0 1.7H5.2V2.7H0ZM0 3.4H5.2V4.4H0Z" fill="#b4b9bf"/></svg>
<div style="left:677.00px;top:54.60px;width:347.00px;height:13.90px;background:#455364;border-radius:2px 0 0 0;"></div>
<div style="left:704.00px;top:54.60px;width:0.70px;height:13.60px;background:#3a4757;"></div>
<div style="left:728.00px;top:54.60px;width:0.70px;height:13.60px;background:#3a4757;"></div>
<div style="left:749.50px;top:54.60px;width:0.70px;height:13.60px;background:#3a4757;"></div>
<div class="clip" style="left:677px;top:54.6px;width:23.6px;height:13.6px">
<div class="t" style="top:4.49px;font-size:5.700px;line-height:7.41px;color:#dfe1e2;font-family:'Liberation Sans',sans-serif;left:6.00px;transform:scaleX(1.0917);transform-origin:0 50%;">Name</div>
</div>
<svg style="left:698.60px;top:60.70px" width="4.40" height="2.40" viewBox="0 0 34 22"><path d="M0 22H34L17 0Z" fill="#fff"/></svg>
<div class="t" style="top:59.09px;font-size:5.700px;line-height:7.41px;color:#dfe1e2;font-family:'Liberation Sans',sans-serif;left:710.50px;transform:scaleX(0.9306);transform-origin:0 50%;">Type</div>
<div class="t" style="top:59.09px;font-size:5.700px;line-height:7.41px;color:#dfe1e2;font-family:'Liberation Sans',sans-serif;left:733.80px;transform:scaleX(0.9018);transform-origin:0 50%;">Size</div>
<div class="t" style="top:59.09px;font-size:5.700px;line-height:7.41px;color:#dfe1e2;font-family:'Liberation Sans',sans-serif;left:880.30px;transform:scaleX(0.9819);transform-origin:0 50%;">Value</div>
<div style="left:675.50px;top:336.00px;width:348.50px;height:0.80px;background:#34404e;"></div>
<div style="left:675.50px;top:348.70px;width:348.50px;height:3.10px;background:#455364;"></div>
<svg style="left:964.20px;top:357.80px" width="5.60" height="6.60" viewBox="0 0 56 66"><path d="M2 2H34V56H2Z" fill="#cfd3d7"/><path d="M16 12H42L54 24V64H16Z" fill="#fff"/></svg>
<div style="left:986.30px;top:359.30px;width:3.40px;height:3.40px;background:#e8151a;"></div>
<svg style="left:1013.10px;top:358.90px" width="5" height="4.2" viewBox="0 0 5 4.4" preserveAspectRatio="none"><path d="M0 0H5V1H0ZM0 1.7H5V2.7H0ZM0 3.4H5V4.4H0Z" fill="#b4b9bf"/></svg>
<div style="left:676.60px;top:370.40px;width:347.40px;height:207.00px;background:#19232d;border:0.8px solid #34404e;border-right:none;border-radius:2px 0 0 2px;"></div>
<div class="t" style="top:378.02px;font-size:7.500px;line-height:9.75px;color:#e6e8ea;font-family:'Liberation Mono',monospace;left:937.93px;transform:scaleX(0.8936);transform-origin:0 50%;">tExecutionNode.py</div>
<div class="t" style="top:395.95px;font-size:7.500px;line-height:9.75px;color:#e6e8ea;font-family:'Liberation Mono',monospace;left:937.93px;transform:scaleX(0.8936);transform-origin:0 50%;">nCommNode.py</div>
<div class="t" style="top:413.88px;font-size:7.500px;line-height:9.75px;color:#e6e8ea;font-family:'Liberation Mono',monospace;left:937.93px;transform:scaleX(0.8936);transform-origin:0 50%;">nScopeNode.py</div>
<div class="t" style="top:431.81px;font-size:7.500px;line-height:9.75px;color:#e6e8ea;font-family:'Liberation Mono',monospace;left:937.93px;transform:scaleX(0.8936);transform-origin:0 50%;">ortNode.py</div>
<div class="t" style="top:449.75px;font-size:7.500px;line-height:9.75px;color:#e6e8ea;font-family:'Liberation Mono',monospace;left:937.93px;transform:scaleX(0.8936);transform-origin:0 50%;">ONode.py</div>
<div class="t" style="top:467.67px;font-size:7.500px;line-height:9.75px;color:#e6e8ea;font-family:'Liberation Mono',monospace;left:937.93px;transform:scaleX(0.8936);transform-origin:0 50%;">Node.py</div>
<div class="t" style="top:485.60px;font-size:7.500px;line-height:9.75px;color:#e6e8ea;font-family:'Liberation Mono',monospace;left:937.93px;transform:scaleX(0.8936);transform-origin:0 50%;">ectorNode.py</div>
<div class="t" style="top:503.52px;font-size:7.500px;line-height:9.75px;color:#e6e8ea;font-family:'Liberation Mono',monospace;left:679.90px;transform:scaleX(0.8936);transform-origin:0 50%;">&lt;ecal.core.subscriber.ProtoSubscriber object at 0x000001CCB61B4E60&gt;</div>
<div class="t" style="top:512.50px;font-size:7.500px;line-height:9.75px;color:#e6e8ea;font-family:'Liberation Mono',monospace;left:679.90px;transform:scaleX(0.8936);transform-origin:0 50%;">&lt;ecal.core.subscriber.ProtoSubscriber object at 0x000001CCB61B4E20&gt;</div>
<div class="t" style="top:521.47px;font-size:7.500px;line-height:9.75px;color:#e6e8ea;font-family:'Liberation Mono',monospace;left:679.90px;transform:scaleX(0.8936);transform-origin:0 50%;">&lt;ecal.core.subscriber.ProtoSubscriber object at 0x000001CCB61B4EE0&gt;</div>
<div class="t" style="top:530.43px;font-size:7.500px;line-height:9.75px;color:#e6e8ea;font-family:'Liberation Mono',monospace;left:679.90px;transform:scaleX(0.8936);transform-origin:0 50%;">&lt;ecal.core.subscriber.ProtoSubscriber object at 0x000001CCB61B4FA0&gt;</div>
<div class="t" style="top:539.40px;font-size:7.500px;line-height:9.75px;color:#e6e8ea;font-family:'Liberation Mono',monospace;left:679.90px;transform:scaleX(0.8936);transform-origin:0 50%;">&lt;ecal.core.subscriber.ProtoSubscriber object at 0x000001CCB61B10A0&gt;</div>
<div class="t" style="top:548.38px;font-size:7.500px;line-height:9.75px;color:#e6e8ea;font-family:'Liberation Mono',monospace;left:679.90px;transform:scaleX(0.8936);transform-origin:0 50%;">&lt;ecal.core.subscriber.ProtoSubscriber object at 0x000001CCB61B1160&gt;</div>
<div class="t" style="top:557.35px;font-size:7.500px;line-height:9.75px;color:#e6e8ea;font-family:'Liberation Mono',monospace;left:679.90px;transform:scaleX(0.8936);transform-origin:0 50%;">&lt;ecal.core.subscriber.ProtoSubscriber object at 0x000001CCB61B1220&gt;</div>
<div style="left:1018.60px;top:380.50px;width:4.60px;height:191.00px;background:#19232d;border:0.7px solid #3a4654;border-radius:2.3px;"></div>
<div style="left:1018.60px;top:542.00px;width:4.60px;height:13.00px;background:#60798b;border-radius:2.3px;"></div>
<svg style="left:1018.90px;top:375.50px" width="4.00" height="3.00" viewBox="0 0 4 3"><path d="M0 3H4L2 0Z" fill="#4a5868"/></svg>
<svg style="left:1018.90px;top:572.80px" width="4.00" height="3.00" viewBox="0 0 4 3"><path d="M0 0H4L2 3Z" fill="#4a5868"/></svg>
<div style="left:804.90px;top:577.50px;width:43.90px;height:11.10px;background:#54687a;border-top:2px solid #2a8fdc;border-radius:1.5px 1.5px 0 0;"></div>
<div style="left:849.90px;top:578.40px;width:20.60px;height:10.20px;background:#3b4859;border-radius:1.5px 1.5px 0 0;"></div>
<div style="left:871.80px;top:578.40px;width:25.70px;height:10.20px;background:#3b4859;border-radius:1.5px 1.5px 0 0;"></div>
<div class="t" style="top:580.60px;font-size:6.000px;line-height:7.80px;color:#dfe1e2;font-family:'Liberation Sans',sans-serif;left:806.80px;transform:scaleX(0.9130);transform-origin:0 50%;">IPython Console</div>
<div class="t" style="top:580.60px;font-size:6.000px;line-height:7.80px;color:#dfe1e2;font-family:'Liberation Sans',sans-serif;left:851.90px;transform:scaleX(0.8946);transform-origin:0 50%;">History</div>
<div class="t" style="top:580.60px;font-size:6.000px;line-height:7.80px;color:#dfe1e2;font-family:'Liberation Sans',sans-serif;left:873.80px;transform:scaleX(0.9615);transform-origin:0 50%;">Terminal</div>
<div class="t" style="top:591.80px;font-size:6.000px;line-height:7.80px;color:#dfe1e2;font-family:'Liberation Sans',sans-serif;left:702.20px;transform:scaleX(0.9656);transform-origin:0 50%;-webkit-text-stroke:0.14px currentColor;">custom (Python 3.8.10)</div>
<div class="t" style="top:591.80px;font-size:6.000px;line-height:7.80px;color:#dfe1e2;font-family:'Liberation Sans',sans-serif;left:778.30px;transform:scaleX(0.9568);transform-origin:0 50%;-webkit-text-stroke:0.14px currentColor;">Completions: custom</div>
<div class="t" style="top:591.80px;font-size:6.000px;line-height:7.80px;color:#dfe1e2;font-family:'Liberation Sans',sans-serif;left:847.80px;transform:scaleX(0.9264);transform-origin:0 50%;-webkit-text-stroke:0.14px currentColor;">LSP: Python</div>
<div class="t" style="top:591.80px;font-size:6.000px;line-height:7.80px;color:#dfe1e2;font-family:'Liberation Sans',sans-serif;left:885.60px;transform:scaleX(0.9507);transform-origin:0 50%;-webkit-text-stroke:0.14px currentColor;">Line 78, Col 5</div>
<div class="t" style="top:591.80px;font-size:6.000px;line-height:7.80px;color:#dfe1e2;font-family:'Liberation Sans',sans-serif;left:927.80px;transform:scaleX(0.9295);transform-origin:0 50%;-webkit-text-stroke:0.14px currentColor;">UTF-8</div>
<div class="t" style="top:591.80px;font-size:6.000px;line-height:7.80px;color:#dfe1e2;font-family:'Liberation Sans',sans-serif;left:950.90px;transform:scaleX(0.8425);transform-origin:0 50%;-webkit-text-stroke:0.14px currentColor;">CRLF</div>
<div class="t" style="top:591.80px;font-size:6.000px;line-height:7.80px;color:#dfe1e2;font-family:'Liberation Sans',sans-serif;left:971.00px;transform:scaleX(0.9203);transform-origin:0 50%;-webkit-text-stroke:0.14px currentColor;">RW</div>
<div class="t" style="top:591.80px;font-size:6.000px;line-height:7.80px;color:#dfe1e2;font-family:'Liberation Sans',sans-serif;left:988.80px;transform:scaleX(0.9700);transform-origin:0 50%;-webkit-text-stroke:0.14px currentColor;">Mem 67%</div>
<svg style="left:838.80px;top:593.20px" width="4.60" height="4.00" viewBox="0 0 46 40"><path d="M4 22L16 34L42 6" fill="none" stroke="#dfe1e2" stroke-width="6"/></svg>
<svg style="left:768.60px;top:592.60px" width="5.40" height="5.40" viewBox="0 0 54 54"><path d="M6 6L20 48L28 30L46 22Z" fill="none" stroke="#dfe1e2" stroke-width="5"/><path d="M34 4L38 10M48 14L42 18M22 2L24 8" stroke="#dfe1e2" stroke-width="4"/></svg>
<div id="win" style="left:75.4px;top:134.4px;width:863.6px;height:377.20000000000005px;background:#f0f0f0;border-radius:4.4px;box-shadow:0 3px 14px rgba(0,0,0,.45),0 0 0 0.5px rgba(60,60,60,.5);overflow:hidden">
<div style="left:0.00px;top:0.00px;width:863.60px;height:16.30px;background:#f3f3f3;"></div>
<div style="left:0.00px;top:16.30px;width:863.60px;height:12.00px;background:#fdfdfd;"></div>
<div style="left:3.90px;top:4.90px;width:8.5px;height:6.6px;background:linear-gradient(90deg,rgba(0,0,0,0) 0%,rgba(0,0,0,0) 52%,#f2f4f5 53%,#f2f4f5 100%),linear-gradient(180deg,#3183b4 0%,#3a9b5e 100%);border:0.8px solid #b4b9be;"></div>
<div class="t" style="top:4.71px;font-size:6.600px;line-height:8.58px;color:#8c8c8c;font-family:'Liberation Sans',sans-serif;left:15.40px;transform:scaleX(0.9998);transform-origin:0 50%;">UCon Test Suite - tester.json</div>
<svg style="left:794.50px;top:7.70px" width="6.00" height="1.00" viewBox="0 0 60 10"><path d="M0 2H60V8H0Z" fill="#9c9c9c"/></svg>
<svg style="left:820.40px;top:5.40px" width="6.00" height="6.20" viewBox="0 0 60 62"><rect x="4" y="4" width="52" height="54" rx="8" fill="none" stroke="#9a9a9a" stroke-width="6"/></svg>
<svg style="left:846.90px;top:5.50px" width="6.00" height="6.00" viewBox="0 0 48 48"><path d="M2 2L46 46M46 2L2 46" stroke="#959595" stroke-width="4.6" fill="none"/></svg>
<div class="t" style="top:19.54px;font-size:6.400px;line-height:8.32px;color:#a6a6a6;font-family:'Liberation Sans',sans-serif;left:3.60px;transform:scaleX(0.9793);transform-origin:0 50%;">File</div>
<div class="t" style="top:19.54px;font-size:6.400px;line-height:8.32px;color:#a6a6a6;font-family:'Liberation Sans',sans-serif;left:21.20px;transform:scaleX(1.0109);transform-origin:0 50%;">Instruments</div>
<div class="t" style="top:19.54px;font-size:6.400px;line-height:8.32px;color:#a6a6a6;font-family:'Liberation Sans',sans-serif;left:62.50px;transform:scaleX(1.0104);transform-origin:0 50%;">Setup</div>
<div class="t" style="top:43.56px;font-size:5.750px;line-height:7.48px;color:#222222;font-family:'Liberation Sans',sans-serif;left:13.90px;transform:scaleX(1.0052);transform-origin:0 50%;">Test Protocols</div>
<div style="left:13.90px;top:59.60px;width:7.40px;height:7.40px;background:#fbfbfb;border:1px solid rgba(90,90,90,.6);border-radius:1.6px;"></div>
<div class="t" style="top:60.46px;font-size:5.750px;line-height:7.48px;color:#222222;font-family:'Liberation Sans',sans-serif;left:23.90px;transform:scaleX(0.9320);transform-origin:0 50%;">SITS_REM</div>
<div style="left:71.30px;top:57.30px;width:40.60px;height:12.00px;background:#fdfdfd;border:0.7px solid #dadada;border-bottom-color:#c6c6c6;border-radius:2.2px;"></div>
<div class="t" style="top:60.36px;font-size:5.750px;line-height:7.48px;color:#222222;font-family:'Liberation Sans',sans-serif;left:-58.40px;width:300px;text-align:center;transform:scaleX(0.9486);transform-origin:50% 50%;">Expand</div>
<div style="left:13.90px;top:76.19px;width:7.40px;height:7.40px;background:#fbfbfb;border:1px solid rgba(90,90,90,.6);border-radius:1.6px;"></div>
<div class="t" style="top:77.05px;font-size:5.750px;line-height:7.48px;color:#222222;font-family:'Liberation Sans',sans-serif;left:23.90px;transform:scaleX(0.9793);transform-origin:0 50%;">SITS_STIM</div>
<div style="left:71.30px;top:73.89px;width:40.60px;height:12.00px;background:#fdfdfd;border:0.7px solid #dadada;border-bottom-color:#c6c6c6;border-radius:2.2px;"></div>
<div class="t" style="top:76.95px;font-size:5.750px;line-height:7.48px;color:#222222;font-family:'Liberation Sans',sans-serif;left:-58.40px;width:300px;text-align:center;transform:scaleX(0.9486);transform-origin:50% 50%;">Expand</div>
<div style="left:13.90px;top:92.78px;width:7.40px;height:7.40px;background:#fbfbfb;border:1px solid rgba(90,90,90,.6);border-radius:1.6px;"></div>
<div class="t" style="top:93.64px;font-size:5.750px;line-height:7.48px;color:#222222;font-family:'Liberation Sans',sans-serif;left:23.90px;transform:scaleX(0.9256);transform-origin:0 50%;">SSTS_DAC</div>
<div style="left:71.30px;top:90.48px;width:40.60px;height:12.00px;background:#fdfdfd;border:0.7px solid #dadada;border-bottom-color:#c6c6c6;border-radius:2.2px;"></div>
<div class="t" style="top:93.54px;font-size:5.750px;line-height:7.48px;color:#222222;font-family:'Liberation Sans',sans-serif;left:-58.40px;width:300px;text-align:center;transform:scaleX(0.9486);transform-origin:50% 50%;">Expand</div>
<div style="left:13.90px;top:109.37px;width:7.40px;height:7.40px;background:#fbfbfb;border:1px solid rgba(90,90,90,.6);border-radius:1.6px;"></div>
<div class="t" style="top:110.23px;font-size:5.750px;line-height:7.48px;color:#222222;font-family:'Liberation Sans',sans-serif;left:23.90px;transform:scaleX(0.9292);transform-origin:0 50%;">SSTS_REM</div>
<div style="left:71.30px;top:107.07px;width:40.60px;height:12.00px;background:#fdfdfd;border:0.7px solid #dadada;border-bottom-color:#c6c6c6;border-radius:2.2px;"></div>
<div class="t" style="top:110.13px;font-size:5.750px;line-height:7.48px;color:#222222;font-family:'Liberation Sans',sans-serif;left:-58.40px;width:300px;text-align:center;transform:scaleX(0.9486);transform-origin:50% 50%;">Expand</div>
<div style="left:13.90px;top:125.96px;width:7.40px;height:7.40px;background:#fbfbfb;border:1px solid rgba(90,90,90,.6);border-radius:1.6px;"></div>
<div class="t" style="top:126.82px;font-size:5.750px;line-height:7.48px;color:#222222;font-family:'Liberation Sans',sans-serif;left:23.90px;transform:scaleX(0.9639);transform-origin:0 50%;">SSTS_STIM</div>
<div style="left:71.30px;top:123.66px;width:40.60px;height:12.00px;background:#fdfdfd;border:0.7px solid #dadada;border-bottom-color:#c6c6c6;border-radius:2.2px;"></div>
<div class="t" style="top:126.72px;font-size:5.750px;line-height:7.48px;color:#222222;font-family:'Liberation Sans',sans-serif;left:-58.40px;width:300px;text-align:center;transform:scaleX(0.9486);transform-origin:50% 50%;">Expand</div>
<div style="left:13.90px;top:142.55px;width:7.40px;height:7.40px;background:#fbfbfb;border:1px solid rgba(90,90,90,.6);border-radius:1.6px;"></div>
<div class="t" style="top:143.41px;font-size:5.750px;line-height:7.48px;color:#222222;font-family:'Liberation Sans',sans-serif;left:23.90px;transform:scaleX(0.9198);transform-origin:0 50%;">SUTS_REM</div>
<div style="left:71.30px;top:140.25px;width:40.60px;height:12.00px;background:#fdfdfd;border:0.7px solid #dadada;border-bottom-color:#c6c6c6;border-radius:2.2px;"></div>
<div class="t" style="top:143.31px;font-size:5.750px;line-height:7.48px;color:#222222;font-family:'Liberation Sans',sans-serif;left:-58.40px;width:300px;text-align:center;transform:scaleX(0.9486);transform-origin:50% 50%;">Expand</div>
<div style="left:13.90px;top:159.14px;width:7.40px;height:7.40px;background:#fbfbfb;border:1px solid rgba(90,90,90,.6);border-radius:1.6px;"></div>
<div class="t" style="top:160.00px;font-size:5.750px;line-height:7.48px;color:#222222;font-family:'Liberation Sans',sans-serif;left:23.90px;transform:scaleX(0.9545);transform-origin:0 50%;">SUTS_STIM</div>
<div style="left:71.30px;top:156.84px;width:40.60px;height:12.00px;background:#fdfdfd;border:0.7px solid #dadada;border-bottom-color:#c6c6c6;border-radius:2.2px;"></div>
<div class="t" style="top:159.90px;font-size:5.750px;line-height:7.48px;color:#222222;font-family:'Liberation Sans',sans-serif;left:-58.40px;width:300px;text-align:center;transform:scaleX(0.9486);transform-origin:50% 50%;">Expand</div>
<div style="left:13.90px;top:175.73px;width:7.40px;height:7.40px;background:#fbfbfb;border:1px solid rgba(90,90,90,.6);border-radius:1.6px;"></div>
<div class="t" style="top:176.59px;font-size:5.750px;line-height:7.48px;color:#222222;font-family:'Liberation Sans',sans-serif;left:23.90px;transform:scaleX(0.9150);transform-origin:0 50%;">TESTING</div>
<div style="left:71.30px;top:173.43px;width:40.60px;height:12.00px;background:#fdfdfd;border:0.7px solid #dadada;border-bottom-color:#c6c6c6;border-radius:2.2px;"></div>
<div class="t" style="top:176.49px;font-size:5.750px;line-height:7.48px;color:#222222;font-family:'Liberation Sans',sans-serif;left:-58.40px;width:300px;text-align:center;transform:scaleX(0.9486);transform-origin:50% 50%;">Expand</div>
<div style="left:13.90px;top:192.32px;width:7.40px;height:7.40px;background:#0f63c0;border-radius:1.4px;"></div>
<svg style="left:15.10px;top:193.92px" width="4.80" height="4.20" viewBox="0 0 48 42"><path d="M5 22L18 35L44 6" fill="none" stroke="#fff" stroke-width="10" stroke-linecap="round" stroke-linejoin="round"/></svg>
<div class="t" style="top:193.18px;font-size:5.750px;line-height:7.48px;color:#222222;font-family:'Liberation Sans',sans-serif;left:23.90px;transform:scaleX(0.9477);transform-origin:0 50%;">TEST_SUITE_VA</div>
<div style="left:71.30px;top:190.02px;width:40.60px;height:12.00px;background:#fdfdfd;border:0.7px solid #dadada;border-bottom-color:#c6c6c6;border-radius:2.2px;"></div>
<div class="t" style="top:193.08px;font-size:5.750px;line-height:7.48px;color:#222222;font-family:'Liberation Sans',sans-serif;left:-58.40px;width:300px;text-align:center;transform:scaleX(0.9486);transform-origin:50% 50%;">Expand</div>
<div style="left:13.90px;top:208.91px;width:7.40px;height:7.40px;background:#fbfbfb;border:1px solid rgba(90,90,90,.6);border-radius:1.6px;"></div>
<div class="t" style="top:209.77px;font-size:5.750px;line-height:7.48px;color:#222222;font-family:'Liberation Sans',sans-serif;left:23.90px;transform:scaleX(0.9479);transform-origin:0 50%;">VALIDATION</div>
<div style="left:71.30px;top:206.61px;width:40.60px;height:12.00px;background:#fdfdfd;border:0.7px solid #dadada;border-bottom-color:#c6c6c6;border-radius:2.2px;"></div>
<div class="t" style="top:209.67px;font-size:5.750px;line-height:7.48px;color:#222222;font-family:'Liberation Sans',sans-serif;left:-58.40px;width:300px;text-align:center;transform:scaleX(0.9486);transform-origin:50% 50%;">Expand</div>
<div style="left:14.60px;top:340.40px;width:46.50px;height:11.20px;background:#f5f5f5;border:0.7px solid #eaeaea;border-bottom-color:#eaeaea;border-radius:2.2px;"></div>
<div class="t" style="top:343.06px;font-size:5.750px;line-height:7.48px;color:#a0a0a0;font-family:'Liberation Sans',sans-serif;left:-112.15px;width:300px;text-align:center;transform:scaleX(0.9722);transform-origin:50% 50%;">Stop</div>
<div style="left:65.90px;top:340.40px;width:46.00px;height:11.20px;background:#fdfdfd;border:0.7px solid #dadada;border-bottom-color:#c6c6c6;border-radius:2.2px;"></div>
<div class="t" style="top:343.06px;font-size:5.750px;line-height:7.48px;color:#222222;font-family:'Liberation Sans',sans-serif;left:-61.10px;width:300px;text-align:center;transform:scaleX(1.0541);transform-origin:50% 50%;">Start</div>
<div style="left:120.20px;top:37.50px;width:0.80px;height:318.90px;background:#cfcfcf;"></div>
<div style="left:245.90px;top:37.50px;width:0.80px;height:318.90px;background:#cfcfcf;"></div>
<div class="t" style="top:43.56px;font-size:5.750px;line-height:7.48px;color:#222222;font-family:'Liberation Sans',sans-serif;left:129.20px;transform:scaleX(0.9875);transform-origin:0 50%;">Node status</div>
<div style="left:129.90px;top:59.10px;width:7.60px;height:7.40px;background:#06c806;"></div>
<div class="t" style="top:59.96px;font-size:5.750px;line-height:7.48px;color:#222222;font-family:'Liberation Sans',sans-serif;left:140.50px;transform:scaleX(0.9879);transform-origin:0 50%;">Test Execution Node</div>
<div style="left:196.40px;top:57.10px;width:40.30px;height:11.40px;background:#fdfdfd;border:0.7px solid #dadada;border-bottom-color:#c6c6c6;border-radius:2.2px;"></div>
<div class="t" style="top:59.86px;font-size:5.750px;line-height:7.48px;color:#222222;font-family:'Liberation Sans',sans-serif;left:66.55px;width:300px;text-align:center;transform:scaleX(0.9722);transform-origin:50% 50%;">Stop</div>
<div style="left:129.90px;top:74.83px;width:7.60px;height:7.40px;background:#ffa30a;"></div>
<div class="t" style="top:75.69px;font-size:5.750px;line-height:7.48px;color:#222222;font-family:'Liberation Sans',sans-serif;left:140.50px;transform:scaleX(0.9249);transform-origin:0 50%;">COM Node</div>
<div style="left:196.40px;top:72.83px;width:40.30px;height:11.40px;background:#fdfdfd;border:0.7px solid #dadada;border-bottom-color:#c6c6c6;border-radius:2.2px;"></div>
<div class="t" style="top:75.59px;font-size:5.750px;line-height:7.48px;color:#222222;font-family:'Liberation Sans',sans-serif;left:66.55px;width:300px;text-align:center;transform:scaleX(0.9722);transform-origin:50% 50%;">Stop</div>
<div style="left:129.90px;top:90.56px;width:7.60px;height:7.40px;background:#ffa30a;"></div>
<div class="t" style="top:91.42px;font-size:5.750px;line-height:7.48px;color:#222222;font-family:'Liberation Sans',sans-serif;left:140.50px;transform:scaleX(0.9574);transform-origin:0 50%;">Scope Node</div>
<div style="left:196.40px;top:88.56px;width:40.30px;height:11.40px;background:#fdfdfd;border:0.7px solid #dadada;border-bottom-color:#c6c6c6;border-radius:2.2px;"></div>
<div class="t" style="top:91.32px;font-size:5.750px;line-height:7.48px;color:#222222;font-family:'Liberation Sans',sans-serif;left:66.55px;width:300px;text-align:center;transform:scaleX(0.9722);transform-origin:50% 50%;">Stop</div>
<div style="left:129.90px;top:106.29px;width:7.60px;height:7.40px;background:#06c806;"></div>
<div class="t" style="top:107.15px;font-size:5.750px;line-height:7.48px;color:#222222;font-family:'Liberation Sans',sans-serif;left:140.50px;transform:scaleX(0.9692);transform-origin:0 50%;">Report Node</div>
<div style="left:196.40px;top:104.29px;width:40.30px;height:11.40px;background:#fdfdfd;border:0.7px solid #dadada;border-bottom-color:#c6c6c6;border-radius:2.2px;"></div>
<div class="t" style="top:107.05px;font-size:5.750px;line-height:7.48px;color:#222222;font-family:'Liberation Sans',sans-serif;left:66.55px;width:300px;text-align:center;transform:scaleX(0.9722);transform-origin:50% 50%;">Stop</div>
<div style="left:129.90px;top:122.02px;width:7.60px;height:7.40px;background:#ffa30a;"></div>
<div class="t" style="top:122.88px;font-size:5.750px;line-height:7.48px;color:#222222;font-family:'Liberation Sans',sans-serif;left:140.50px;transform:scaleX(0.9118);transform-origin:0 50%;">GPIO Node</div>
<div style="left:196.40px;top:120.02px;width:40.30px;height:11.40px;background:#fdfdfd;border:0.7px solid #dadada;border-bottom-color:#c6c6c6;border-radius:2.2px;"></div>
<div class="t" style="top:122.78px;font-size:5.750px;line-height:7.48px;color:#222222;font-family:'Liberation Sans',sans-serif;left:66.55px;width:300px;text-align:center;transform:scaleX(0.9722);transform-origin:50% 50%;">Stop</div>
<div style="left:129.90px;top:137.75px;width:7.60px;height:7.40px;background:#ffa30a;"></div>
<div class="t" style="top:138.61px;font-size:5.750px;line-height:7.48px;color:#222222;font-family:'Liberation Sans',sans-serif;left:140.50px;transform:scaleX(0.9129);transform-origin:0 50%;">PSU Node</div>
<div style="left:196.40px;top:135.75px;width:40.30px;height:11.40px;background:#fdfdfd;border:0.7px solid #dadada;border-bottom-color:#c6c6c6;border-radius:2.2px;"></div>
<div class="t" style="top:138.51px;font-size:5.750px;line-height:7.48px;color:#222222;font-family:'Liberation Sans',sans-serif;left:66.55px;width:300px;text-align:center;transform:scaleX(0.9722);transform-origin:50% 50%;">Stop</div>
<div style="left:129.90px;top:153.48px;width:7.60px;height:7.40px;background:#ffa30a;"></div>
<div class="t" style="top:154.34px;font-size:5.750px;line-height:7.48px;color:#222222;font-family:'Liberation Sans',sans-serif;left:140.50px;transform:scaleX(0.9090);transform-origin:0 50%;">DETECTOR Node</div>
<div style="left:196.40px;top:151.48px;width:40.30px;height:11.40px;background:#fdfdfd;border:0.7px solid #dadada;border-bottom-color:#c6c6c6;border-radius:2.2px;"></div>
<div class="t" style="top:154.24px;font-size:5.750px;line-height:7.48px;color:#222222;font-family:'Liberation Sans',sans-serif;left:66.55px;width:300px;text-align:center;transform:scaleX(0.9722);transform-origin:50% 50%;">Stop</div>
<div class="t" style="top:38.76px;font-size:5.750px;line-height:7.48px;color:#222222;font-family:'Liberation Sans',sans-serif;left:255.00px;transform:scaleX(0.9881);transform-origin:0 50%;">Console output:</div>
<div style="left:255.30px;top:49.20px;width:598.00px;height:290.60px;background:#1e1e1e;border:0.6px solid #101010;"></div>
<div class="t" style="top:51.53px;font-size:5.950px;line-height:7.74px;color:#14ee14;font-family:'Liberation Sans',sans-serif;left:258.70px;transform:scaleX(0.9639);transform-origin:0 50%;">GUI: Node started...</div>
<div class="t" style="top:59.61px;font-size:5.950px;line-height:7.74px;color:#14ee14;font-family:'Liberation Sans',sans-serif;left:258.70px;transform:scaleX(1.0007);transform-origin:0 50%;">10:32:01 | Configuration loaded from:</div>
<div class="t" style="top:67.69px;font-size:5.950px;line-height:7.74px;color:#14ee14;font-family:'Liberation Sans',sans-serif;left:258.70px;transform:scaleX(0.9844);transform-origin:0 50%;">10:32:01 | C:/INNO_SVN/UConTestTrunk/Configuration/tester.json</div>
<div class="t" style="top:75.77px;font-size:5.950px;line-height:7.74px;color:#14ee14;font-family:'Liberation Sans',sans-serif;left:258.70px;transform:scaleX(0.9856);transform-origin:0 50%;">10:32:02 | GPIO: Node started...</div>
<div class="t" style="top:83.85px;font-size:5.950px;line-height:7.74px;color:#14ee14;font-family:'Liberation Sans',sans-serif;left:258.70px;transform:scaleX(0.9926);transform-origin:0 50%;">10:32:02 | COM: Node started...</div>
<div class="t" style="top:91.93px;font-size:5.950px;line-height:7.74px;color:#14ee14;font-family:'Liberation Sans',sans-serif;left:258.70px;transform:scaleX(0.9905);transform-origin:0 50%;">10:32:02 | PSU: Node started...</div>
<div class="t" style="top:100.01px;font-size:5.950px;line-height:7.74px;color:#14ee14;font-family:'Liberation Sans',sans-serif;left:258.70px;transform:scaleX(0.9983);transform-origin:0 50%;">10:32:02 | TCX: Node started...</div>
<div class="t" style="top:108.09px;font-size:5.950px;line-height:7.74px;color:#14ee14;font-family:'Liberation Sans',sans-serif;left:258.70px;transform:scaleX(0.9791);transform-origin:0 50%;">10:32:03 | REPORT: Node started...</div>
<div class="t" style="top:116.17px;font-size:5.950px;line-height:7.74px;color:#14ee14;font-family:'Liberation Sans',sans-serif;left:258.70px;transform:scaleX(0.9750);transform-origin:0 50%;">10:32:03 | SCOPE: Node started...</div>
<div style="left:255.60px;top:345.40px;width:40.30px;height:10.50px;background:#f7f7f7;border:0.7px solid #dadada;border-bottom-color:#c6c6c6;border-radius:2.2px;"></div>
<div class="t" style="top:347.71px;font-size:5.750px;line-height:7.48px;color:#222222;font-family:'Liberation Sans',sans-serif;left:125.75px;width:300px;text-align:center;transform:scaleX(0.9671);transform-origin:50% 50%;">Clear console</div>
<div style="left:300.10px;top:345.40px;width:47.80px;height:10.50px;background:#f7f7f7;border:0.7px solid #dadada;border-bottom-color:#c6c6c6;border-radius:2.2px;"></div>
<div class="t" style="top:347.71px;font-size:5.750px;line-height:7.48px;color:#222222;font-family:'Liberation Sans',sans-serif;left:174.20px;width:300px;text-align:center;transform:scaleX(0.9914);transform-origin:50% 50%;">Save console as..</div>
<div style="left:351.90px;top:344.60px;width:0.80px;height:12.20px;background:#c9c9c9;"></div>
<div class="t" style="top:346.96px;font-size:5.750px;line-height:7.48px;color:#222222;font-family:'Liberation Sans',sans-serif;left:356.40px;transform:scaleX(0.9871);transform-origin:0 50%;">Passed / Failed:</div>
<div style="left:401.10px;top:345.40px;width:68.00px;height:10.50px;background:#f2f2f2;border:0.6px solid #e3e3e3;border-radius:1.5px;"></div>
<div class="t" style="top:346.96px;font-size:5.750px;line-height:7.48px;color:#9a9a9a;font-family:'Liberation Sans',sans-serif;left:285.10px;width:300px;text-align:center;transform:scaleX(1.0186);transform-origin:50% 50%;">99/0</div>
<div style="left:472.70px;top:344.60px;width:0.80px;height:12.20px;background:#c9c9c9;"></div>
<div style="left:477.60px;top:345.10px;width:376.50px;height:10.50px;background:#e6e6e6;border:0.7px solid #c6c6c6;border-radius:1px;"></div>
<div class="t" style="top:346.76px;font-size:5.750px;line-height:7.48px;color:#777;font-family:'Liberation Sans',sans-serif;left:515.60px;width:300px;text-align:center;transform:scaleX(0.8423);transform-origin:50% 50%;">0%</div>
<div style="left:162.60px;top:193.10px;width:128.89999999999998px;height:138.5px;background:#f1f1f1;border-radius:4.2px;box-shadow:0 3px 12px rgba(0,0,0,.28),0 0 0 0.6px rgba(90,90,90,.32);overflow:hidden">
<div style="left:0.00px;top:0.00px;width:128.90px;height:16.00px;background:#f4f4f4;"></div>
<div style="left:3.80px;top:5.30px;width:8.5px;height:6.5px;background:linear-gradient(90deg,rgba(0,0,0,0) 0%,rgba(0,0,0,0) 52%,#f2f4f5 53%,#f2f4f5 100%),linear-gradient(180deg,#3183b4 0%,#3a9b5e 100%);border:0.8px solid #b4b9be;"></div>
<div class="t" style="top:4.34px;font-size:6.400px;line-height:8.32px;color:#9c9c9c;font-family:'Liberation Sans',sans-serif;left:15.70px;transform:scaleX(0.9890);transform-origin:0 50%;">Test_suite_validati...</div>
<div class="t" style="top:4.34px;font-size:6.400px;line-height:8.32px;color:#8a8a8a;font-family:'Liberation Sans',sans-serif;left:-60.70px;width:300px;text-align:center;">?</div>
<svg style="left:112.10px;top:5.40px" width="5.80" height="5.80" viewBox="0 0 48 48"><path d="M2 2L46 46M46 2L2 46" stroke="#8e8e8e" stroke-width="5" fill="none"/></svg>
<div style="left:10.70px;top:28.40px;width:7.40px;height:7.40px;background:#0f63c0;border-radius:1.4px;"></div>
<svg style="left:11.90px;top:30.00px" width="4.80" height="4.20" viewBox="0 0 48 42"><path d="M5 22L18 35L44 6" fill="none" stroke="#fff" stroke-width="10" stroke-linecap="round" stroke-linejoin="round"/></svg>
<div class="t" style="top:29.26px;font-size:5.750px;line-height:7.48px;color:#222222;font-family:'Liberation Sans',sans-serif;left:20.60px;transform:scaleX(1.0298);transform-origin:0 50%;">(Select All)</div>
<div style="left:10.70px;top:40.07px;width:7.40px;height:7.40px;background:#0f63c0;border-radius:1.4px;"></div>
<svg style="left:11.90px;top:41.67px" width="4.80" height="4.20" viewBox="0 0 48 42"><path d="M5 22L18 35L44 6" fill="none" stroke="#fff" stroke-width="10" stroke-linecap="round" stroke-linejoin="round"/></svg>
<div class="t" style="top:40.93px;font-size:5.750px;line-height:7.48px;color:#222222;font-family:'Liberation Sans',sans-serif;left:20.60px;transform:scaleX(0.9824);transform-origin:0 50%;">TC01_DetectorNodeValidation</div>
<div style="left:10.70px;top:51.74px;width:7.40px;height:7.40px;background:#0f63c0;border-radius:1.4px;"></div>
<svg style="left:11.90px;top:53.34px" width="4.80" height="4.20" viewBox="0 0 48 42"><path d="M5 22L18 35L44 6" fill="none" stroke="#fff" stroke-width="10" stroke-linecap="round" stroke-linejoin="round"/></svg>
<div class="t" style="top:52.60px;font-size:5.750px;line-height:7.48px;color:#222222;font-family:'Liberation Sans',sans-serif;left:20.60px;transform:scaleX(0.9607);transform-origin:0 50%;">TC02_PSUNodeValidation</div>
<div style="left:10.70px;top:63.41px;width:7.40px;height:7.40px;background:#0f63c0;border-radius:1.4px;"></div>
<svg style="left:11.90px;top:65.01px" width="4.80" height="4.20" viewBox="0 0 48 42"><path d="M5 22L18 35L44 6" fill="none" stroke="#fff" stroke-width="10" stroke-linecap="round" stroke-linejoin="round"/></svg>
<div class="t" style="top:64.27px;font-size:5.750px;line-height:7.48px;color:#222222;font-family:'Liberation Sans',sans-serif;left:20.60px;transform:scaleX(0.9617);transform-origin:0 50%;">TC03_COMNodeValidation</div>
<div style="left:10.70px;top:75.08px;width:7.40px;height:7.40px;background:#0f63c0;border-radius:1.4px;"></div>
<svg style="left:11.90px;top:76.68px" width="4.80" height="4.20" viewBox="0 0 48 42"><path d="M5 22L18 35L44 6" fill="none" stroke="#fff" stroke-width="10" stroke-linecap="round" stroke-linejoin="round"/></svg>
<div class="t" style="top:75.94px;font-size:5.750px;line-height:7.48px;color:#222222;font-family:'Liberation Sans',sans-serif;left:20.60px;transform:scaleX(0.9557);transform-origin:0 50%;">TC04_GPIONodeValidation</div>
<div style="left:10.70px;top:86.75px;width:7.40px;height:7.40px;background:#0f63c0;border-radius:1.4px;"></div>
<svg style="left:11.90px;top:88.35px" width="4.80" height="4.20" viewBox="0 0 48 42"><path d="M5 22L18 35L44 6" fill="none" stroke="#fff" stroke-width="10" stroke-linecap="round" stroke-linejoin="round"/></svg>
<div class="t" style="top:87.61px;font-size:5.750px;line-height:7.48px;color:#222222;font-family:'Liberation Sans',sans-serif;left:20.60px;transform:scaleX(0.9654);transform-origin:0 50%;">TC05_GUIValidation</div>
<div style="left:10.70px;top:98.42px;width:7.40px;height:7.40px;background:#0f63c0;border-radius:1.4px;"></div>
<svg style="left:11.90px;top:100.02px" width="4.80" height="4.20" viewBox="0 0 48 42"><path d="M5 22L18 35L44 6" fill="none" stroke="#fff" stroke-width="10" stroke-linecap="round" stroke-linejoin="round"/></svg>
<div class="t" style="top:99.28px;font-size:5.750px;line-height:7.48px;color:#222222;font-family:'Liberation Sans',sans-serif;left:20.60px;transform:scaleX(0.9504);transform-origin:0 50%;">TC06_SCOPENodeValidation</div>
<div style="left:36.40px;top:121.10px;width:40.10px;height:10.70px;background:#fdfdfd;border:0.7px solid #dadada;border-bottom-color:#c6c6c6;border-radius:2.2px;"></div>
<div class="t" style="top:123.31px;font-size:5.750px;line-height:7.48px;color:#222222;font-family:'Liberation Sans',sans-serif;left:-93.55px;width:300px;text-align:center;transform:scaleX(0.9385);transform-origin:50% 50%;">Save</div>
<div style="left:81.30px;top:121.10px;width:40.10px;height:10.70px;background:#fdfdfd;border:0.7px solid #dadada;border-bottom-color:#c6c6c6;border-radius:2.2px;"></div>
<div class="t" style="top:123.31px;font-size:5.750px;line-height:7.48px;color:#222222;font-family:'Liberation Sans',sans-serif;left:-48.65px;width:300px;text-align:center;transform:scaleX(0.9386);transform-origin:50% 50%;">Cancel</div>
</div>
<div style="left:0.00px;top:0.00px;width:863.60px;height:1.00px;background:rgba(25,35,45,.38);"></div>
<div style="left:0.00px;top:0.00px;width:1.00px;height:377.20px;background:rgba(25,35,45,.42);"></div>
<div style="left:0.00px;top:376.20px;width:863.60px;height:1.00px;background:rgba(25,35,45,.45);"></div>
</div>
</div></body></html>
